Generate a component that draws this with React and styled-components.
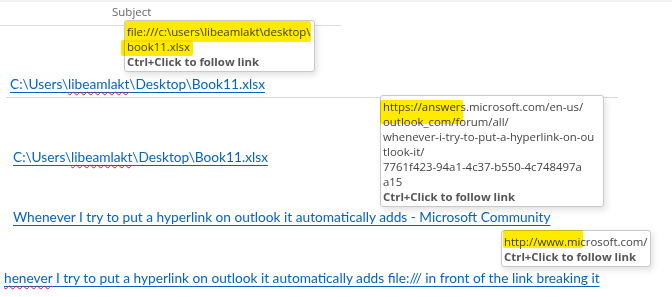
import React from "react";
import styled, { createGlobalStyle } from "styled-components";

const Global = createGlobalStyle`
  html, body { margin: 0; padding: 0; background: #fff; }
  body { width: 672px; height: 297px; overflow: hidden; }
`;

const Page = styled.div`
  position: relative;
  width: 672px;
  height: 297px;
  background: #fff;
  font-family: Lato, "Liberation Sans", sans-serif;
`;

const Header = styled.div`
  box-sizing: border-box;
  height: 26px;
  border-top: 2px solid #f1f1f1;
  display: flex;
  align-items: center;
  padding-bottom: 1px;
`;

const HeaderCell = styled.div`
  box-sizing: border-box;
  width: 341px;
  height: 24px;
  border-bottom: 1px solid #dcdcdc;
  padding-left: 112px;
  padding-bottom: 3px;
  display: flex;
  align-items: center;
  font-family: "Open Sans", sans-serif;
  font-size: 11.5px;
  color: #666;
`;

const Row = styled.div`
  box-sizing: border-box;
  height: ${(p) => (p.$h ? `${p.$h}px` : "auto")};
  padding-top: ${(p) => p.$top}px;
  padding-left: ${(p) => p.$left}px;
  line-height: 18px;
  font-size: 13.7px;
  white-space: nowrap;
`;

const Divider = styled.div`
  margin-left: 6px;
  width: 612px;
  height: 1px;
  background: #d9d9d9;
`;

const Link = styled.a`
  color: #0563c1;
  text-decoration: underline;
  text-decoration-color: #0563c1;
  text-underline-offset: 3px;
  text-decoration-thickness: 1px;
  cursor: pointer;
`;

const Misspelled = styled.span`
  text-decoration: underline wavy #e81123;
  text-decoration-thickness: 1px;
  text-underline-offset: 2px;
`;

const Tooltip = styled.div`
  position: absolute;
  left: ${(p) => p.$x}px;
  top: ${(p) => p.$y}px;
  width: ${(p) => p.$w}px;
  box-sizing: border-box;
  background: #fff;
  border: 1px solid #c9c9c9;
  border-radius: 3px;
  box-shadow: 2px 3px 6px rgba(0, 0, 0, 0.12);
  padding: 3px 2px 2px 2px;
  overflow: hidden;
  font-family: "Open Sans", sans-serif;
  font-size: 11.4px;
  line-height: 15px;
  color: #444;
  z-index: 2;
`;

const TipLine = styled.div`
  white-space: nowrap;
  font-weight: ${(p) => (p.$bold ? 700 : 400)};
  color: ${(p) => (p.$bold ? "#555" : "#444")};
`;

const Highlight = styled.div`
  position: absolute;
  left: ${(p) => p.$x}px;
  top: ${(p) => p.$y}px;
  width: ${(p) => p.$w}px;
  height: ${(p) => p.$h}px;
  background: #ffeb00;
  mix-blend-mode: multiply;
  border-radius: 2px;
  z-index: 3;
`;

export default function App() {
  return (
    <>
      <Global />
      <Page>
        <Header>
          <HeaderCell>Subject</HeaderCell>
        </Header>

        <Row $top={49} $left={10} $h={71}>
          <Link>
            C:\Users\<Misspelled>libeamlakt</Misspelled>\Desktop\Book11.xlsx
          </Link>
        </Row>
        <Divider />
        <Row $top={50} $left={13}>
          <Link>
            C:\Users\<Misspelled>libeamlakt</Misspelled>\Desktop\Book11.xlsx
          </Link>
        </Row>
        <Row $top={42} $left={13}>
          <Link>
            Whenever I try to put a hyperlink on outlook it automatically adds - Microsoft Community
          </Link>
        </Row>
        <Row $top={43} $left={4}>
          <Link>
            <Misspelled>henever</Misspelled> I try to put a hyperlink on outlook it automatically adds file:/// in front of the link breaking it
          </Link>
        </Row>

        <Tooltip $x={124} $y={20} $w={191}>
          <TipLine>file:///c:\users\libeamlakt\desktop\</TipLine>
          <TipLine>book11.xlsx</TipLine>
          <TipLine $bold>Ctrl+Click to follow link</TipLine>
        </Tooltip>
        <Highlight $x={125} $y={21} $w={186} $h={21} />
        <Highlight $x={121} $y={40} $w={72} $h={16} />

        <Tooltip $x={380} $y={95} $w={224}>
          <TipLine>https://answers.microsoft.com/en-us/</TipLine>
          <TipLine>outlook_com/forum/all/</TipLine>
          <TipLine>whenever-i-try-to-put-a-hyperlink-on-ou</TipLine>
          <TipLine>tlook-it/</TipLine>
          <TipLine>7761f423-94a1-4c37-b550-4c748497a</TipLine>
          <TipLine>a15</TipLine>
          <TipLine $bold>Ctrl+Click to follow link</TipLine>
        </Tooltip>
        <Highlight $x={380} $y={100} $w={83} $h={24} />

        <Tooltip $x={501} $y={230} $w={150}>
          <TipLine>http://www.microsoft.com/</TipLine>
          <TipLine $bold>Ctrl+Click to follow link</TipLine>
        </Tooltip>
        <Highlight $x={503} $y={230} $w={80} $h={18} />
      </Page>
    </>
  );
}
